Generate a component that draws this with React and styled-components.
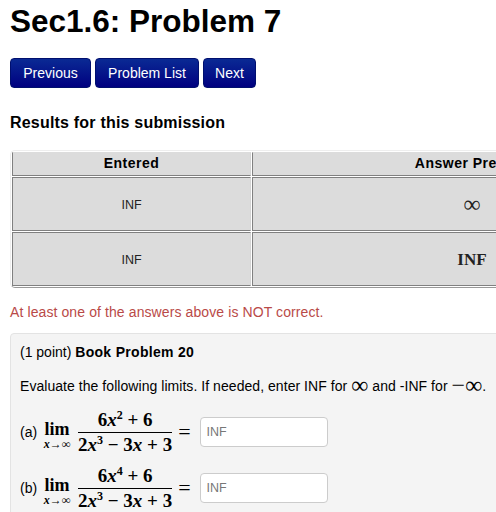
import React from "react";
import styled, { createGlobalStyle } from "styled-components";

const problems = [
  { label: "(a)", power: "2" },
  { label: "(b)", power: "4" },
];

const App = () => {
  return (
    <Page>
      <GlobalStyle />
      <Title>Sec1.6: Problem 7</Title>
      <Nav>
        <NavButton $width={81}>Previous</NavButton>
        <NavButton $width={104}>Problem List</NavButton>
        <NavButton $width={53}>Next</NavButton>
      </Nav>
      <ResultsTitle>Results for this submission</ResultsTitle>
      <TableFrame>
        <Results>
          <thead>
            <tr>
              <HeadCell $width={239}>Entered</HeadCell>
              <HeadCell $width={440}>Answer Preview</HeadCell>
            </tr>
          </thead>
          <tbody>
            <tr>
              <Cell>INF</Cell>
              <Cell>
                <InfGlyph>∞</InfGlyph>
              </Cell>
            </tr>
            <tr>
              <Cell>INF</Cell>
              <Cell>
                <MathText>INF</MathText>
              </Cell>
            </tr>
          </tbody>
        </Results>
      </TableFrame>
      <Warning>At least one of the answers above is NOT correct.</Warning>
      <Well>
        <Heading>
          (1 point) <b>Book Problem 20</b>
        </Heading>
        <Intro>
          Evaluate the following limits. If needed, enter INF for <InfGlyph>∞</InfGlyph> and -INF for{" "}
          <InfGlyph>−∞</InfGlyph>.
        </Intro>
        <Rows>
          {problems.map((p) => (
            <Row key={p.label}>
              <Label>{p.label}</Label>
              <Limit>
                <LimWord>lim</LimWord>
                <LimUnder>
                  <i>x</i>→∞
                </LimUnder>
              </Limit>
              <Fraction>
                <Numerator>
                  6<i>x</i>
                  <sup>{p.power}</sup> + 6
                </Numerator>
                <Denominator>
                  2<i>x</i>
                  <sup>3</sup> − 3<i>x</i> + 3
                </Denominator>
              </Fraction>
              <Equals>=</Equals>
              <AnswerInput readOnly value="INF" />
            </Row>
          ))}
        </Rows>
      </Well>
    </Page>
  );
};

export default App;

const GlobalStyle = createGlobalStyle`
  html, body {
    margin: 0;
    background: #fff;
    overflow: hidden;
  }
`;
const Page = styled.div`
  width: 496px;
  height: 512px;
  overflow: hidden;
  padding-left: 10px;
  box-sizing: border-box;
  font-family: "Liberation Sans", Arial, sans-serif;
  font-size: 14px;
  color: #000;
`;
const Title = styled.h1`
  margin: 0;
  padding-top: 2px;
  height: 38px;
  font-size: 31.5px;
  line-height: 38px;
  font-weight: bold;
`;
const Nav = styled.div`
  display: flex;
  gap: 4px;
  margin-top: 18px;
`;
const NavButton = styled.a`
  width: ${(p) => p.$width}px;
  height: 30px;
  display: flex;
  align-items: center;
  justify-content: center;
  box-sizing: border-box;
  border-radius: 4px;
  border: 1px solid #000f6e;
  background: linear-gradient(#0a2a94, #000080);
  color: #fff;
  font-size: 14px;
`;
const ResultsTitle = styled.h2`
  margin: 25px 0 0;
  font-size: 16px;
  line-height: 20px;
  font-weight: bold;
  letter-spacing: 0.2px;
`;
const TableFrame = styled.div`
  margin-top: 17px;
  width: 684px;
  height: 138px;
  box-sizing: border-box;
  border: 1px solid;
  border-color: #eee #999 #999 #eee;
  border-radius: 5px;
  overflow: hidden;
`;
const Results = styled.table`
  border-collapse: separate;
  border-spacing: 1px;
  table-layout: fixed;
  width: 682px;
`;
const HeadCell = styled.th`
  width: ${(p) => p.$width}px;
  height: 24px;
  padding: 0 0 2px;
  box-sizing: border-box;
  background: #dcdcdc;
  border: 1px solid;
  border-color: #dcdcdc #d4d4d4 #808080 #808080;
  font-size: 14px;
  letter-spacing: 0.5px;
  text-align: center;
`;
const Cell = styled.td`
  height: 54px;
  padding: 2px 0 0;
  box-sizing: border-box;
  background: #dcdcdc;
  border: 1px solid;
  border-color: #808080 #d4d4d4 #808080 #808080;
  text-align: center;
  font-size: 12.5px;
  color: #222;
`;
const InfGlyph = styled.span`
  font-family: "Liberation Serif", serif;
  font-size: 24px;
  line-height: 14px;
  vertical-align: -2px;
`;
const MathText = styled.span`
  font-family: "Liberation Serif", serif;
  font-weight: bold;
  font-size: 17px;
`;
const Warning = styled.p`
  margin: 15px 0 0;
  line-height: 18px;
  letter-spacing: 0.1px;
  color: #b94a48;
`;
const Well = styled.div`
  margin-top: 12px;
  width: 520px;
  height: 190px;
  padding: 9px 9px;
  box-sizing: border-box;
  background: #f4f4f4;
  border: 1px solid #e3e3e3;
  border-radius: 4px;
`;
const Heading = styled.div`
  line-height: 18px;
  b {
    letter-spacing: 0.3px;
  }
`;
const Intro = styled.div`
  margin-top: 16px;
  height: 18px;
  line-height: 18px;
  letter-spacing: 0.05px;
  white-space: nowrap;
`;
const Rows = styled.div`
  display: flex;
  flex-direction: column;
  gap: 26px;
  margin-top: 22px;
`;
const Row = styled.div`
  display: flex;
  align-items: center;
  height: 30px;
`;
const Label = styled.span`
  width: 22px;
`;
const Limit = styled.span`
  display: flex;
  flex-direction: column;
  align-items: center;
  width: 30px;
  margin-top: 6px;
  font-family: "Liberation Serif", serif;
  font-weight: bold;
`;
const LimWord = styled.span`
  font-size: 18px;
  line-height: 17px;
`;
const LimUnder = styled.span`
  font-size: 12px;
  line-height: 12px;
  white-space: nowrap;
  i {
    display: inline-block;
    line-height: 12px;
  }
`;
const Fraction = styled.span`
  display: flex;
  flex-direction: column;
  align-items: center;
  margin-left: 6px;
  font-family: "Liberation Serif", serif;
  font-weight: bold;
  font-size: 19px;
  line-height: 24px;
  white-space: nowrap;
  sup {
    font-size: 12px;
    line-height: 0;
  }
`;
const Numerator = styled.span``;
const Denominator = styled.span`
  border-top: 1px solid #000;
`;
const Equals = styled.span`
  font-family: "Liberation Serif", serif;
  font-size: 22px;
  margin: 0 9px 0 6px;
`;
const AnswerInput = styled.input`
  width: 128px;
  height: 30px;
  padding: 0 6px;
  box-sizing: border-box;
  border: 1px solid #ccc;
  border-radius: 4px;
  background: #fff;
  font-family: "Liberation Sans", Arial, sans-serif;
  font-size: 12.5px;
  color: #777;
`;
